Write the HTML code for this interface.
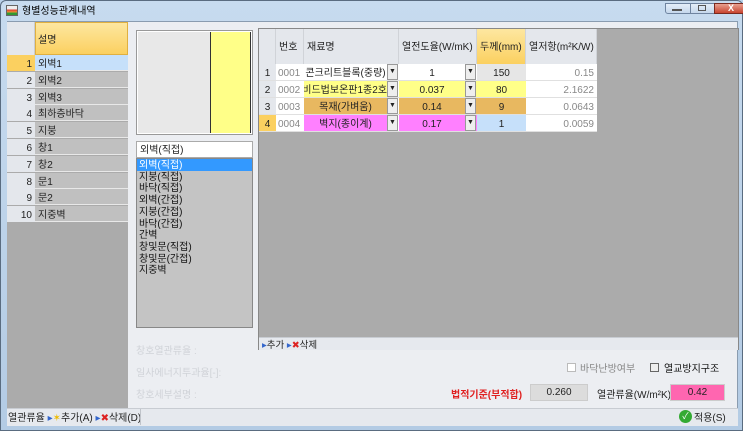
<!DOCTYPE html><html><head><meta charset="utf-8"><style>
*{box-sizing:border-box;margin:0;padding:0}
body{width:743px;height:431px;overflow:hidden;background:#b9d1ea;font-family:"Liberation Sans","Noto Sans CJK KR",sans-serif;font-size:10px;line-height:12px;color:#222;position:relative}
.a{position:absolute}
.frame{left:0;top:0;width:743px;height:431px;background:linear-gradient(#c7dbef,#b3cbe4);border:1px solid #5a6c80;border-radius:6px 6px 0 0}
.client{left:7px;top:21px;width:731px;height:405px;background:#eceef2;border:1px solid #8a9cb0}
.cell{position:absolute;white-space:nowrap;overflow:hidden;line-height:12px;padding-top:4px}
</style></head><body>
<div class="a frame"></div>
<div class="a" style="left:6px;top:5px;width:12px;height:11px;background:linear-gradient(#eee 40%,#d33 40%,#e93 70%,#393 70%);border:1px solid #666"></div>
<div class="a" style="left:22px;top:6px;font-size:10px;color:#000">형별성능관계내역</div>
<div class="a" style="left:665px;top:3px;width:26px;height:11px;border:1px solid #6f84a0;background:linear-gradient(#e4eef9,#c5d7ec);border-radius:0 0 0 3px"></div>
<div class="a" style="left:672px;top:9px;width:10px;height:2px;background:#555"></div>
<div class="a" style="left:690px;top:3px;width:25px;height:11px;border:1px solid #6f84a0;background:linear-gradient(#e4eef9,#c5d7ec)"></div>
<div class="a" style="left:698px;top:5px;width:8px;height:6px;border:1px solid #555"></div>
<div class="a" style="left:714px;top:3px;width:34px;height:11px;border:1px solid #7a2a20;background:linear-gradient(#e8a090,#c84530);color:#fff;font-size:9px;text-align:center;line-height:9px;font-weight:bold">X</div>
<div class="a client"></div>
<!-- left grid -->
<div class="a" style="left:7px;top:22px;width:121px;height:386px;background:#ababab"></div>
<div class="a" style="left:7px;top:22px;width:28px;height:33px;background:#e4e7ec;border-right:1px solid #c8ccd2"></div>
<div class="a" style="left:35px;top:22px;width:93px;height:33px;background:linear-gradient(#fde7a0,#fbd060);border:1px solid #e0b040"></div>
<div class="a" style="left:38px;top:35px">설명</div>
<div id="lg"></div>
<!-- middle -->
<div class="a" style="left:136px;top:30px;width:117px;height:105px;background:#fff;border:1px solid #999"></div>
<div class="a" style="left:138px;top:32px;width:72px;height:101px;background:#e8e8e8"></div>
<div class="a" style="left:210px;top:32px;width:41px;height:101px;background:#ffff88;border-left:1px solid #333;border-right:1px solid #333"></div>
<div class="a" style="left:136px;top:141px;width:117px;height:17px;background:#fff;border:1px solid #aaa;padding:3px 3px 0;line-height:12px">외벽(직접)</div>
<div class="a" style="left:136px;top:158px;width:117px;height:170px;background:#c4c4c4;border:1px solid #888"></div>
<div class="a" style="left:137px;top:159px;width:115px;height:12px;background:#3399ff"></div>
<div class="a" style="left:139px;top:160px;line-height:11.7px;color:#111">
<span style="color:#fff">외벽(직접)</span><br>지붕(직접)<br>바닥(직접)<br>외벽(간접)<br>지붕(간접)<br>바닥(간접)<br>간벽<br>창및문(직접)<br>창및문(간접)<br>지중벽</div>
<div class="a" style="left:136px;top:346px;color:#d0d3d8">창호열관류율 :</div>
<div class="a" style="left:136px;top:368px;color:#d0d3d8">일사에너지투과율[-]:</div>
<div class="a" style="left:136px;top:390px;color:#d0d3d8">창호세부설명 :</div>
<!-- right grid -->
<div class="a" style="left:258px;top:28px;width:481px;height:322px;background:#ababab;border:1px solid #888"></div>
<div class="a" style="left:259px;top:29px;width:338px;height:103px;background:#fff"></div>
<div id="rg"></div>
<div class="a" style="left:259px;top:337px;width:479px;height:13px;background:#e6e9ee;border-top:1px solid #c8ccd2"></div>
<div class="a" style="left:262px;top:340px;font-size:9.5px;line-height:11px"><span style="color:#36c">▸</span>추가 <span style="color:#36c">▸</span><span style="color:#d22">✖</span>삭제</div>
<!-- bottom right -->
<div class="a" style="left:567px;top:363px;width:9px;height:9px;border:1px solid #bbb;background:#fff"></div>
<div class="a" style="left:580px;top:364px;color:#888">바닥난방여부</div>
<div class="a" style="left:650px;top:363px;width:9px;height:9px;border:1px solid #666;background:#eee"></div>
<div class="a" style="left:664px;top:364px;color:#111">열교방지구조</div>
<div class="a" style="left:451px;top:390px;color:#e02020;font-weight:bold">법적기준(부적합)</div>
<div class="a" style="left:530px;top:384px;width:58px;height:17px;background:#dcdcdc;border:1px solid #ccc;text-align:center;line-height:15px">0.260</div>
<div class="a" style="left:597px;top:390px">열관류율(W/m²K)</div>
<div class="a" style="left:670px;top:384px;width:55px;height:17px;background:#ff66b0;border:1px solid #ccc;text-align:center;line-height:15px">0.42</div>
<!-- status -->
<div class="a" style="left:7px;top:408px;width:731px;height:18px;background:#e6e9ee;border-top:1px solid #c8ccd2"></div>
<div class="a" style="left:8px;top:413px">열관류율 <span style="color:#36c">▸</span><span style="color:#eb0">✶</span>추가(A) <span style="color:#36c">▸</span><span style="color:#d22">✖</span>삭제(D)</div>
<div class="a" style="left:140px;top:409px;width:1px;height:16px;background:#c0c4ca"></div>
<div class="a" style="left:679px;top:410px;width:13px;height:13px;border-radius:50%;background:#3a3;color:#fff;font-size:9px;text-align:center;line-height:13px">✓</div>
<div class="a" style="left:694px;top:413px">적용(S)</div>
<script>
var h='';var names=['외벽1','외벽2','외벽3','최하층바닥','지붕','창1','창2','문1','문2','지중벽'];
for(var i=0;i<10;i++){var y=55+i*16.8;var sel=i==0;
h+='<div class="cell" style="left:7px;top:'+y+'px;width:28px;height:16px;background:'+(sel?'#fbd060':'#e4e7ec')+';text-align:right;padding:4px 3px 0">'+(i+1)+'</div>';
h+='<div class="cell" style="left:35px;top:'+y+'px;width:93px;height:16px;background:'+(sel?'#c6e0fa':'#c0c0c0')+';border-bottom:1px solid #e8e8e8;padding:4px 3px 0">'+names[i]+'</div>';}
document.getElementById('lg').innerHTML=h;
var cols=[[259,17],[276,28],[304,95],[399,78],[477,49],[526,71]];
var hd=['','번호','재료명','열전도율(W/mK)','두께(mm)','열저항(m²K/W)'];
var r='';
for(var c=0;c<6;c++){r+='<div class="cell" style="left:'+cols[c][0]+'px;top:29px;width:'+cols[c][1]+'px;height:35px;background:'+(c==4?'linear-gradient(#fde7a0,#fbd060)':'#e4e7ec')+';border-right:1px solid #d0d3d8;padding:13px 0 0 3px">'+hd[c]+'</div>';}
var rows=[['0001','콘크리트블록(중량)','1','150','0.15','#fff','#fff','#e6e6e6'],['0002','비드법보온판1종2호','0.037','80','2.1622','#ffff88','#ffff88','#ffff88'],['0003','목재(가벼움)','0.14','9','0.0643','#e8b860','#e8b860','#e8b860'],['0004','벽지(종이계)','0.17','1','0.0059','#ff80ff','#ff80ff','#c6e0fa']];
for(var i=0;i<4;i++){var y=64+i*17,R=rows[i];
r+='<div class="cell" style="left:259px;top:'+y+'px;width:17px;height:16px;background:'+(i==3?'#fbd060':'#e4e7ec')+';text-align:center">'+(i+1)+'</div>';
r+='<div class="cell" style="left:276px;top:'+y+'px;width:28px;height:16px;color:#888;padding-left:2px">'+R[0]+'</div>';
r+='<div class="cell" style="left:304px;top:'+y+'px;width:83px;height:16px;background:'+R[5]+';text-align:center;direction:rtl">'+R[1]+'</div>';
r+='<div class="cell" style="left:387px;top:'+y+'px;width:11px;height:16px;background:#eee;border:1px solid #999;font-size:7px;text-align:center;line-height:14px;padding:0">▼</div>';
r+='<div class="cell" style="left:399px;top:'+y+'px;width:66px;height:16px;background:'+R[6]+';text-align:center">'+R[2]+'</div>';
r+='<div class="cell" style="left:465px;top:'+y+'px;width:11px;height:16px;background:#eee;border:1px solid #999;font-size:7px;text-align:center;line-height:14px;padding:0">▼</div>';
r+='<div class="cell" style="left:476px;top:'+y+'px;width:1px;height:16px;background:'+R[6]+';padding:0"></div>';
r+='<div class="cell" style="left:477px;top:'+y+'px;width:49px;height:16px;background:'+R[7]+';text-align:center">'+R[3]+'</div>';
r+='<div class="cell" style="left:526px;top:'+y+'px;width:71px;height:16px;color:#888;text-align:right;padding-right:3px">'+R[4]+'</div>';
r+='<div class="cell" style="left:259px;top:'+(y+16)+'px;width:338px;height:1px;background:#e0e0e0;padding:0"></div>';}
document.getElementById('rg').innerHTML=r;
</script>
</body></html>
